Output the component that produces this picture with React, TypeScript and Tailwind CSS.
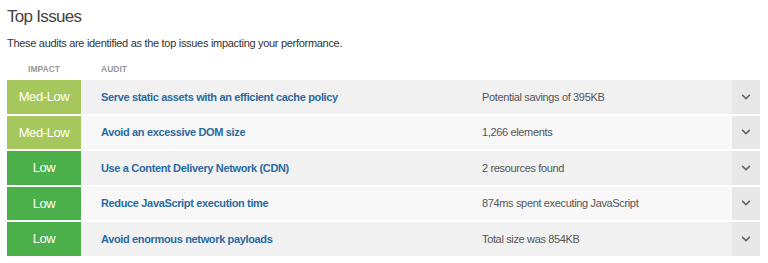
import { FaChevronDown } from "react-icons/fa"

const issues = [
  { impact: "Med-Low", audit: "Serve static assets with an efficient cache policy", detail: "Potential savings of 395KB" },
  { impact: "Med-Low", audit: "Avoid an excessive DOM size", detail: "1,266 elements" },
  { impact: "Low", audit: "Use a Content Delivery Network (CDN)", detail: "2 resources found" },
  { impact: "Low", audit: "Reduce JavaScript execution time", detail: "874ms spent executing JavaScript" },
  { impact: "Low", audit: "Avoid enormous network payloads", detail: "Total size was 854KB" },
]

export default function App() {
  return (
    <div className="w-[768px] h-[263px] bg-white px-[7px] pt-[6px] font-['Liberation_Sans',Arial,sans-serif] overflow-hidden">
      <h1 className="text-[17px] leading-[22px] text-[#444] tracking-[-0.7px]">Top Issues</h1>
      <p className="mt-[8px] text-[11px] leading-[14px] text-[#333] tracking-[-0.3px]">
        These audits are identified as the top issues impacting your performance.
      </p>
      <div className="mt-[13px] flex text-[8.5px] font-bold text-[#999] uppercase leading-[12px]">
        <div className="w-[74px] text-center">Impact</div>
        <div className="pl-[20px]">Audit</div>
      </div>
      <div className="mt-[5px] w-[753px] flex flex-col gap-[2px]">
        {issues.map((it, i) => (
          <div key={i} className={`flex h-[33.5px] items-center ${i % 2 === 0 ? "bg-[#f1f1f1]" : "bg-[#f8f8f8]"}`}>
            <div
              className={`w-[74px] h-full flex items-center justify-center text-white text-[13px] tracking-[-0.4px] ${
                it.impact === "Low" ? "bg-[#4cb04a]" : "bg-[#a5c75b]"
              }`}
            >
              {it.impact}
            </div>
            <div className="w-[401px] pl-[20px] text-[11px] font-bold text-[#2b6aa0] tracking-[-0.35px]">{it.audit}</div>
            <div className="flex-1 text-[11px] text-[#555] tracking-[-0.35px]">{it.detail}</div>
            <div className="w-[28px] h-full bg-[#e8e8e8] flex items-center justify-center text-[#666]">
              <FaChevronDown size={10} />
            </div>
          </div>
        ))}
      </div>
    </div>
  )
}
